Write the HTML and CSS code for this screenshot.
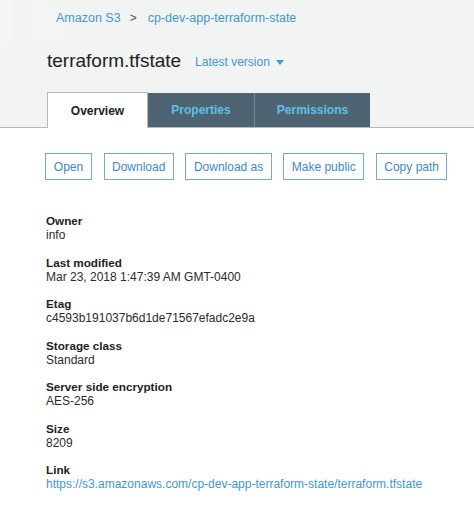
FILE: index.html
```html
<!DOCTYPE html>
<html lang="en">
<head>
<meta charset="utf-8">
<title>terraform.tfstate</title>
<link rel="stylesheet" href="styles.css">
</head>
<body>
<header class="top">
  <svg class="deco" width="70" height="45" viewBox="0 0 70 45" aria-hidden="true">
    <path d="M0 0 H12 V45 H0 Z" fill="#f4f5f5"/>
    <path d="M30 0 H40 L66 22 V40 H30 Z" fill="#f4f5f5"/>
  </svg>
  <nav class="crumbs">
    <a href="#">Amazon S3</a>
    <span class="sep">&gt;</span>
    <a href="#">cp-dev-app-terraform-state</a>
  </nav>
  <div class="title-row">
    <h1>terraform.tfstate</h1>
    <span class="version">Latest version <span class="caret"></span></span>
  </div>
  <div class="tabs">
    <div class="tab active">Overview</div>
    <div class="tab dark props">Properties</div>
    <div class="tab dark perms">Permissions</div>
  </div>
</header>
<main class="content">
  <div class="actions">
    <button class="btn">Open</button>
    <button class="btn">Download</button>
    <button class="btn">Download as</button>
    <button class="btn">Make public</button>
    <button class="btn">Copy path</button>
  </div>
  <dl class="fields">
    <div class="field"><dt>Owner</dt><dd>info</dd></div>
    <div class="field"><dt>Last modified</dt><dd>Mar 23, 2018 1:47:39 AM GMT-0400</dd></div>
    <div class="field"><dt>Etag</dt><dd>c4593b191037b6d1de71567efadc2e9a</dd></div>
    <div class="field"><dt>Storage class</dt><dd>Standard</dd></div>
    <div class="field"><dt>Server side encryption</dt><dd>AES-256</dd></div>
    <div class="field"><dt>Size</dt><dd>8209</dd></div>
    <div class="field"><dt>Link</dt><dd><a href="#">https://s3.amazonaws.com/cp-dev-app-terraform-state/terraform.tfstate</a></dd></div>
  </dl>
</main>
</body>
</html>
```
FILE: styles.css
```css
* { box-sizing: border-box; }
html, body { margin: 0; padding: 0; background: #fff; }
body {
  font-family: "Liberation Sans", Arial, Helvetica, sans-serif;
  font-size: 12px;
  color: #222;
  width: 474px;
  height: 526px;
  overflow: hidden;
}
a { color: #3e99d2; text-decoration: none; }

.top {
  position: relative;
  background: #f2f3f3;
  border-bottom: 1px solid #b3b8b9;
  padding: 10px 0 0 47px;
  height: 128px;
}
.deco { position: absolute; left: 0; top: 0; }
.crumbs {
  position: relative;
  display: flex;
  align-items: center;
  line-height: 17px;
  padding-left: 9px;
  font-size: 12.5px;
}
.crumbs .sep { color: #555; margin: 0 11px 0 9px; font-size: 12px; }
.title-row {
  position: relative;
  display: flex;
  align-items: center;
  margin-top: 23px;
  height: 22px;
}
h1 {
  margin: 0;
  font-size: 19px;
  font-weight: normal;
  color: #222;
  line-height: 22px;
}
.version {
  display: flex;
  align-items: center;
  margin-left: 14px;
  margin-top: 2px;
  color: #3e99d2;
  font-size: 12px;
}
.caret {
  display: inline-block;
  width: 0; height: 0;
  margin-left: 6px;
  border-left: 4px solid transparent;
  border-right: 4px solid transparent;
  border-top: 5px solid #3e99d2;
}
.tabs {
  position: relative;
  display: flex;
  align-items: flex-end;
  margin-top: 20px;
  height: 35px;
}
.tab {
  display: flex;
  align-items: center;
  justify-content: center;
  font-weight: bold;
  font-size: 12px;
}
.tab.active {
  width: 101px;
  height: 36px;
  background: #fff;
  border: 1px solid #b3b8b9;
  border-bottom: none;
  margin-bottom: -1px;
  color: #222;
  padding-top: 1px;
}
.tab.dark {
  height: 34px;
  background: #4f6472;
  color: #5fc0e6;
  padding-bottom: 1px;
}
.tab.props { width: 107px; border-right: 1px solid #7a8a94; }
.tab.perms { width: 115px; }

.content { padding: 25px 0 0 45px; }
.actions { display: flex; gap: 11.5px; }
.btn {
  font-family: inherit;
  font-size: 12px;
  color: #3a8cc5;
  background: #fff;
  border: 1px solid #6eaad6;
  border-radius: 0;
  height: 27px;
  min-width: 47px;
  padding: 0 7.5px;
  margin: 0;
}

.fields { margin: 33px 0 0 1px; padding: 0; display: flex; flex-direction: column; gap: 11.5px; }
.field dt { font-weight: bold; font-size: 11.7px; line-height: 15px; color: #222; }
.field dd { margin: 0; font-size: 12px; line-height: 15px; color: #2b2b2b; }
```
